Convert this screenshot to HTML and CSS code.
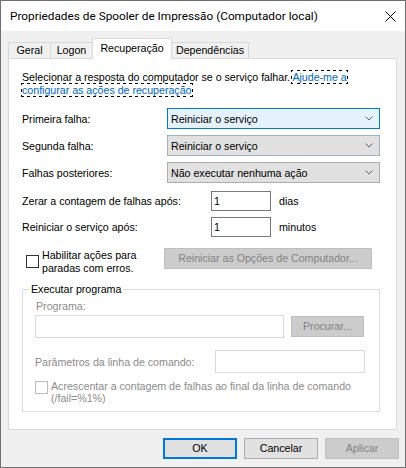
FILE: index.html
```html
<!DOCTYPE html>
<html lang="pt-BR">
<head>
<meta charset="utf-8">
<title>Propriedades de Spooler de Impressão</title>
<link rel="stylesheet" href="styles.css">
</head>
<body>
<div class="window">
  <div class="titlebar">
    <span class="title">Propriedades de Spooler de Impressão (Computador local)</span>
    <svg class="close" width="11" height="11" viewBox="0 0 11 11"><path d="M0.5 0.5L10.5 10.5M10.5 0.5L0.5 10.5" stroke="#000" stroke-width="1" fill="none"/></svg>
  </div>
  <div class="tabs">
    <div class="tab t-geral">Geral</div>
    <div class="tab t-logon">Logon</div>
    <div class="tab t-rec active">Recuperação</div>
    <div class="tab t-dep">Dependências</div>
  </div>
  <div class="panel">
    <p class="desc">Selecionar a resposta do computador se o serviço falhar. <a class="link">Ajude-me a<br>configurar as ações de recuperação</a></p>

    <div class="combos">
      <span class="lbl">Primeira falha:</span>
      <div class="combo focus"><span>Reiniciar o serviço</span><svg class="chev" width="8" height="5" viewBox="0 0 8 5"><path d="M0.5 0.5L4 4L7.5 0.5" stroke="#606060" fill="none"/></svg></div>
      <span class="lbl">Segunda falha:</span>
      <div class="combo hover"><span>Reiniciar o serviço</span><svg class="chev" width="8" height="5" viewBox="0 0 8 5"><path d="M0.5 0.5L4 4L7.5 0.5" stroke="#606060" fill="none"/></svg></div>
      <span class="lbl">Falhas posteriores:</span>
      <div class="combo"><span>Não executar nenhuma ação</span><svg class="chev" width="8" height="5" viewBox="0 0 8 5"><path d="M0.5 0.5L4 4L7.5 0.5" stroke="#606060" fill="none"/></svg></div>
    </div>

    <div class="counts">
      <span class="lbl">Zerar a contagem de falhas após:</span>
      <div class="field">1</div>
      <span class="unit">dias</span>
      <span class="lbl">Reiniciar o serviço após:</span>
      <div class="field">1</div>
      <span class="unit">minutos</span>
    </div>

    <div class="checkrow">
      <div class="check">
        <span class="box"></span>
        <span class="checktext">Habilitar ações para<br>paradas com erros.</span>
      </div>
      <div class="btn disabled wide">Reiniciar as Opções de Computador...</div>
    </div>

    <fieldset class="group">
      <legend>Executar programa</legend>
      <div class="groupbody">
        <div class="dis-lbl prog-lbl">Programa:</div>
        <div class="progrow">
          <div class="field dis prog"></div>
          <div class="btn disabled browse">Procurar...</div>
        </div>
        <div class="paramrow">
          <span class="dis-lbl">Parâmetros da linha de comando:</span>
          <div class="field dis param"></div>
        </div>
        <div class="failrow">
          <span class="box dis"></span>
          <span class="dis-lbl failtext">Acrescentar a contagem de falhas ao final da linha de comando<br>(/fail=%1%)</span>
        </div>
      </div>
    </fieldset>
  </div>
  <div class="footer">
    <div class="btn default">OK</div>
    <div class="btn">Cancelar</div>
    <div class="btn disabled">Aplicar</div>
  </div>
</div>
</body>
</html>
```

FILE: styles.css
```css
* { box-sizing: border-box; }
html, body { margin: 0; padding: 0; }
body {
  font-family: "Liberation Sans", Arial, sans-serif;
  font-size: 10.7px;
  letter-spacing: -0.03px;
  color: #000;
  background: #f0f0f0;
  white-space: nowrap;
}
.window {
  width: 406px;
  height: 468px;
  border: 1px solid #707070;
  background: #f0f0f0;
  display: flex;
  flex-direction: column;
}
.titlebar {
  height: 30px;
  flex-shrink: 0;
  background: #fff;
  display: flex;
  align-items: center;
  justify-content: space-between;
  padding: 0 9px 0 8px;
}
.title {
  font-family: Roboto, "Liberation Sans", Arial, sans-serif;
  font-size: 11.8px;
  letter-spacing: 0;
  line-height: 14px;
  padding-left: 1px;
}
.close { display: block; }

.tabs {
  display: flex;
  align-items: flex-end;
  height: 21px;
  margin-top: 7px;
  padding-left: 7px;
  flex-shrink: 0;
}
.tab {
  height: 17px;
  border: 1px solid #d9d9d9;
  border-bottom: none;
  margin-right: -1px;
  background: #f0f0f0;
  text-align: center;
  line-height: 15px;
}
.t-geral { width: 43px; }
.t-logon { width: 43px; }
.t-rec { width: 80px; }
.t-dep { width: 78px; }
.tab.active {
  height: 21px;
  line-height: 18px;
  background: #fff;
  position: relative;
  z-index: 1;
}

.panel {
  flex-shrink: 0;
  height: 372px;
  margin: -1px 8px 0 7px;
  border: 1px solid #d9d9d9;
  background: #fff;
  padding: 0 0 0 13px;
}
.desc {
  margin: 12px 0 0;
  line-height: 13px;
}
.link {
  color: #0066cc;
  outline: 1px dotted #000;
}

.combos {
  margin-top: 11px;
  display: grid;
  grid-template-columns: 145px 213px;
  grid-auto-rows: 21px;
  row-gap: 6px;
  align-items: center;
}
.lbl { line-height: 14px; }
.combo {
  height: 21px;
  border: 1px solid #adadad;
  background: #e1e1e1;
  display: flex;
  align-items: center;
  justify-content: space-between;
  padding: 0 6px 0 3px;
}
.combo.focus { border-color: #0078d7; background: #e5f1fb; }
.combo.hover { border-color: #9fb1c4; }
.chev { display: block; }

.counts {
  margin-top: 8px;
  display: grid;
  grid-template-columns: 189px 60px auto;
  grid-auto-rows: 20px;
  row-gap: 6px;
  column-gap: 0;
  align-items: center;
}
.unit { margin-left: 8px; }
.field {
  height: 20px;
  border: 1px solid #7a7a7a;
  background: #fff;
  padding-left: 2px;
  line-height: 18px;
}
.field.dis { border-color: #d9d9d9; }

.checkrow {
  margin-top: 11px;
  display: grid;
  grid-template-columns: 142px 208px;
  align-items: start;
}
.check { display: flex; align-items: flex-start; }
.box {
  width: 13px;
  height: 13px;
  border: 1px solid #333;
  background: #fff;
  flex-shrink: 0;
}
.check .box { margin: 7px 0 0 4px; }
.checktext { margin: 1px 0 0 3px; line-height: 13px; }

.btn {
  height: 21px;
  border: 1px solid #adadad;
  background: #e1e1e1;
  text-align: center;
  line-height: 19px;
}
.btn.disabled {
  background: #cccccc;
  border-color: #bfbfbf;
  color: #838383;
}
.btn.default {
  border: 2px solid #0078d7;
  line-height: 17px;
}

.group {
  margin: 7px 0 0;
  width: 358px;
  height: 130px;
  border: 1px solid #dcdcdc;
  padding: 0 0 0 6px;
}
.group legend {
  padding: 0 2px;
  line-height: 14px;
}
.groupbody { margin-left: 6px; }
.dis-lbl { color: #8c8c8c; }
.prog-lbl { margin-top: 3px; line-height: 14px; padding-left: 1px; }
.progrow {
  margin-top: 2px;
  display: flex;
  align-items: flex-start;
  gap: 7px;
}
.prog { width: 249px; height: 23px; }
.browse { width: 73px; margin-top: 1px; }
.paramrow {
  margin-top: 12px;
  display: grid;
  grid-template-columns: 180px 150px;
  align-items: center;
}
.param { height: 23px; }
.failrow {
  margin-top: 7px;
  display: flex;
  align-items: flex-start;
}
.box.dis { border-color: #bcbcbc; margin-top: 1px; }
.failtext { margin-left: 3px; line-height: 12px; }

.footer {
  margin-top: 8px;
  display: flex;
  justify-content: flex-end;
  gap: 7px;
  padding-right: 6px;
}
.footer .btn { width: 74px; }
```
